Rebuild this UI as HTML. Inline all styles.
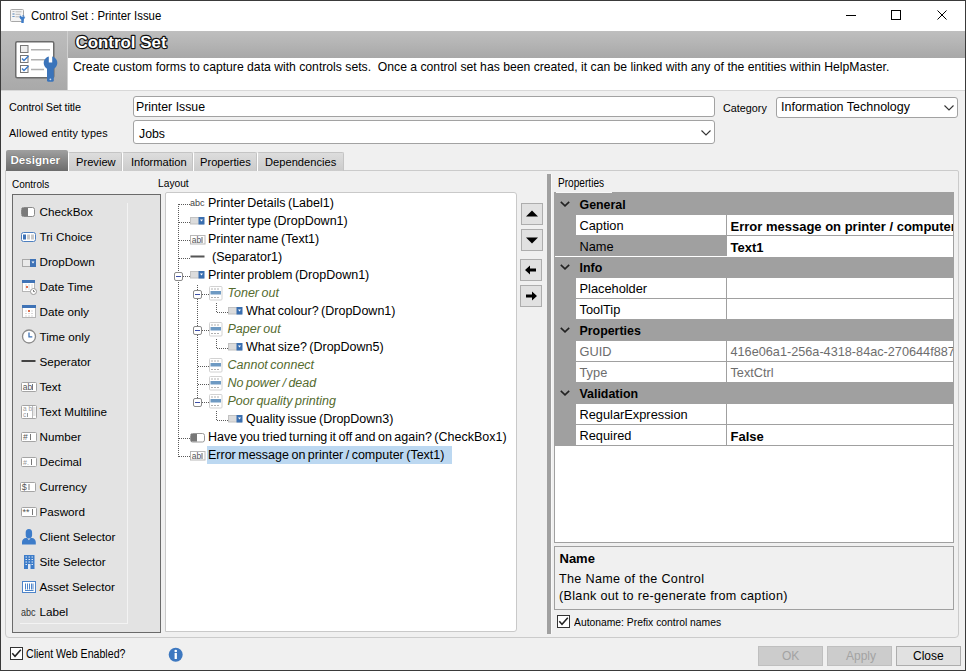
<!DOCTYPE html>
<html><head><meta charset="utf-8">
<style>
*{margin:0;padding:0;box-sizing:border-box;}
html,body{width:966px;height:671px;overflow:hidden;background:#f0f0f0;font-family:"Liberation Sans",sans-serif;color:#000;}
.a{position:absolute;}
.t{position:absolute;white-space:nowrap;line-height:1;}
svg{position:absolute;overflow:visible;}
.ci{font-size:11.4px;}
.tr{font-size:12.3px;}
.it{font-style:italic;color:#5d7a2d;}
.pg{font-size:12.3px;}
.btn{position:absolute;background:#e1e1e1;border:1px solid #adadad;}
</style></head><body>
<!-- window frame -->
<div class="a" style="left:0;top:0;width:966px;height:671px;border:1px solid #3a3a3a;"></div>
<!-- title bar -->
<div class="a" style="left:1px;top:1px;width:964px;height:30px;background:#fff;"></div>
<div class="t" style="left:30.5px;top:9.7px;font-size:12.3px;transform:scaleX(0.925);transform-origin:0 0;">Control Set : Printer Issue</div>
<!-- header -->
<div class="a" style="left:1px;top:31px;width:66px;height:59px;background:linear-gradient(#bdbdbd,#a9a9a9);"></div>
<div class="a" style="left:67px;top:31px;width:1px;height:59px;background:#d0d0d0;"></div>
<div class="a" style="left:68px;top:31px;width:897px;height:27px;background:linear-gradient(#bfbfbf,#a8a8a8);"></div>
<div class="a" style="left:68px;top:58px;width:897px;height:32px;background:#fff;"></div>
<div class="a" style="left:1px;top:90px;width:964px;height:1px;background:#d8d8d8;"></div>
<div class="t" style="left:73px;top:61px;font-size:12.2px;">Create custom forms to capture data with controls sets.&nbsp; Once a control set has been created, it can be linked with any of the entities within HelpMaster.</div>

<!-- title bar buttons -->
<div class="a" style="left:846px;top:15px;width:10px;height:1px;background:#000;"></div>
<div class="a" style="left:891px;top:10px;width:10px;height:10px;border:1px solid #000;"></div>
<svg style="left:937px;top:10px" width="10" height="10"><path d="M0.5 0.5L9.5 9.5M9.5 0.5L0.5 9.5" stroke="#000" stroke-width="1"/></svg>
<!-- form fields -->
<div class="t" style="left:9px;top:102px;font-size:10.8px;letter-spacing:-0.12px;">Control Set title</div>
<div class="t" style="left:9px;top:127.7px;font-size:10.8px;letter-spacing:0.17px;">Allowed entity types</div>
<div class="a" style="left:133px;top:96px;width:582px;height:21px;background:#fff;border:1px solid #a2a2a2;border-radius:3px;"></div>
<div class="t" style="left:136px;top:100.5px;font-size:12.3px;">Printer Issue</div>
<div class="a" style="left:133px;top:120px;width:582px;height:24px;background:#fff;border:1px solid #a2a2a2;border-radius:3px;"></div>
<div class="t" style="left:139px;top:128.3px;font-size:12.3px;">Jobs</div>
<svg style="left:701px;top:130px" width="10" height="6"><path d="M0.5 0.5L5 5L9.5 0.5" stroke="#333" stroke-width="1.1" fill="none"/></svg>
<div class="t" style="left:723px;top:102.5px;font-size:10.8px;">Category</div>
<div class="a" style="left:776px;top:97px;width:182px;height:21px;background:#fff;border:1px solid #a2a2a2;border-radius:3px;"></div>
<div class="t" style="left:781px;top:100.5px;font-size:12.5px;">Information Technology</div>
<svg style="left:944px;top:105px" width="10" height="6"><path d="M0.5 0.5L5 5L9.5 0.5" stroke="#333" stroke-width="1.1" fill="none"/></svg>
<!-- tab panel -->
<div class="a" style="left:5px;top:170px;width:954px;height:468px;border:1px solid #cbcbcb;border-radius:0 2px 4px 4px;"></div>
<!-- tabs -->
<div class="a" style="left:6px;top:150px;width:62px;height:21px;background:linear-gradient(#a0a0a0,#6c6c6c);border-radius:2px 2px 0 0;"></div>
<div class="t" style="left:10.5px;top:154.2px;font-size:11.6px;font-weight:bold;color:#fff;text-shadow:0 0 1px #444;">Designer</div>
<div class="a" style="left:68px;top:152px;width:54px;height:19px;background:linear-gradient(#dddddd,#cbcbcb);border:1px solid #c4c4c4;border-bottom:none;border-left:1px solid #fff;border-radius:2px 2px 0 0;"></div>
<div class="a" style="left:122px;top:152px;width:71px;height:19px;background:linear-gradient(#dddddd,#cbcbcb);border:1px solid #c4c4c4;border-bottom:none;border-left:1px solid #fff;border-radius:2px 2px 0 0;"></div>
<div class="a" style="left:193px;top:152px;width:64px;height:19px;background:linear-gradient(#dddddd,#cbcbcb);border:1px solid #c4c4c4;border-bottom:none;border-left:1px solid #fff;border-radius:2px 2px 0 0;"></div>
<div class="a" style="left:257px;top:152px;width:87px;height:19px;background:linear-gradient(#dddddd,#cbcbcb);border:1px solid #c4c4c4;border-bottom:none;border-left:1px solid #fff;border-radius:2px 2px 0 0;"></div>
<div class="t" style="left:76px;top:156.8px;font-size:11.15px;">Preview</div>
<div class="t" style="left:131px;top:156.8px;font-size:11.15px;">Information</div>
<div class="t" style="left:200px;top:156.8px;font-size:11.15px;">Properties</div>
<div class="t" style="left:265px;top:156.8px;font-size:11.15px;">Dependencies</div>
<div class="t" style="left:12px;top:177.90px;font-size:11.7px;transform:scaleX(0.855);transform-origin:0 0;">Controls</div>
<div class="t" style="left:158.3px;top:177.81px;font-size:11.8px;transform:scaleX(0.867);transform-origin:0 0;">Layout</div>
<div class="a" style="left:12px;top:194px;width:149px;height:439px;background:#e3e3e3;border:1px solid #6a6a6a;"></div>
<div class="a" style="left:127px;top:203px;width:1px;height:421px;background:#f3f3f3;"></div>
<div class="a" style="left:20px;top:623px;width:108px;height:1px;background:#f3f3f3;"></div>
<svg style="left:20px;top:206px" width="16" height="12"><rect x="1.5" y="1.5" width="13" height="9" rx="2" fill="#fff" stroke="#8a8a8a"/><path d="M2 2h6v8h-6z" fill="#7a7a7a"/></svg>
<div class="t" style="left:39.5px;top:205.60px;font-size:11.7px;">CheckBox</div>
<svg style="left:20px;top:231px" width="17" height="12"><rect x="1.5" y="1.5" width="14" height="9" rx="2" fill="#fff" stroke="#4d7fbf"/><rect x="3" y="3.5" width="3" height="5" fill="#3f73b6"/><rect x="7" y="3.5" width="3" height="5" fill="#c9c9c9"/><rect x="11" y="3.5" width="3" height="5" fill="#c9c9c9"/></svg>
<div class="t" style="left:39.5px;top:230.60px;font-size:11.7px;">Tri Choice</div>
<svg style="left:20px;top:258px" width="17" height="10"><rect x="2.5" y="1.5" width="13" height="7" fill="#eaeaea" stroke="#a8a8a8"/><rect x="10" y="1" width="6" height="8" fill="#3f73b6"/><path d="M11.5 3.5h3l-1.5 2z" fill="#fff"/></svg>
<div class="t" style="left:39.5px;top:255.60px;font-size:11.7px;">DropDown</div>
<svg style="left:20px;top:277.5px" width="17" height="17"><rect x="2.5" y="2.5" width="12" height="11" fill="#fff" stroke="#b5b5b5"/><rect x="2" y="2" width="13" height="3" fill="#3f73b6"/><path d="M5 7h2M8 7h2M11 7h2M5 9h2M8 9h2M11 9h2M5 11h2M8 11h2" stroke="#d8d8d8"/><rect x="6" y="8" width="2" height="2" fill="#e07050"/><circle cx="13.5" cy="13.5" r="3" fill="#fff" stroke="#9a9a9a"/><path d="M13.5 12v1.6h1.3" stroke="#555" stroke-width="0.8" fill="none"/></svg>
<div class="t" style="left:39.5px;top:280.60px;font-size:11.7px;">Date Time</div>
<svg style="left:20px;top:303px" width="17" height="16"><rect x="2.5" y="2.5" width="13" height="12" fill="#fff" stroke="#b5b5b5"/><rect x="2" y="2" width="14" height="3" fill="#3f73b6"/><path d="M5 8h2M8 8h2M11 8h2M5 10.5h2M8 10.5h2M11 10.5h2M5 13h2M8 13h2M11 13h2" stroke="#d8d8d8"/><rect x="8" y="7" width="2" height="2" fill="#e07050"/></svg>
<div class="t" style="left:39.5px;top:305.60px;font-size:11.7px;">Date only</div>
<svg style="left:20px;top:328px" width="17" height="17"><circle cx="9" cy="8.5" r="6.5" fill="#fff" stroke="#8a8a8a" stroke-width="1.3"/><path d="M9 4.5v4.3h3.3" stroke="#3f73b6" stroke-width="1.3" fill="none"/></svg>
<div class="t" style="left:39.5px;top:330.60px;font-size:11.7px;">Time only</div>
<svg style="left:20px;top:358.5px" width="17" height="4"><rect x="1.5" y="1" width="14" height="2" fill="#444"/></svg>
<div class="t" style="left:39.5px;top:355.60px;font-size:11.7px;">Seperator</div>
<svg style="left:20px;top:382px" width="18" height="11"><rect x="1.5" y="0.5" width="15" height="9" rx="1" fill="#fff" stroke="#a4a4a4"/><text x="2.8" y="8" font-family="Liberation Sans" font-size="8.5" fill="#555">ab</text><path d="M12.5 2v6" stroke="#777"/></svg>
<div class="t" style="left:39.5px;top:380.60px;font-size:11.7px;">Text</div>
<svg style="left:20px;top:405px" width="18" height="15"><rect x="1.5" y="0.5" width="15" height="13" rx="1" fill="#fff" stroke="#a4a4a4"/><text x="3" y="6" font-family="Liberation Sans" font-size="6.5" fill="#999">a b</text><text x="3" y="12" font-family="Liberation Sans" font-size="6.5" fill="#999">c</text><path d="M7.5 8v4" stroke="#999"/><path d="M12.5 1v12" stroke="#bbb"/><rect x="13" y="2" width="2.5" height="9" fill="#e6e6e6"/></svg>
<div class="t" style="left:39.5px;top:405.60px;font-size:11.7px;">Text Multiline</div>
<svg style="left:20px;top:432px" width="18" height="11"><rect x="1.5" y="0.5" width="15" height="9" rx="1" fill="#fff" stroke="#a4a4a4"/><text x="3" y="8" font-family="Liberation Sans" font-size="8.5" fill="#555">#</text><path d="M10.5 2v6" stroke="#777"/></svg>
<div class="t" style="left:39.5px;top:430.60px;font-size:11.7px;">Number</div>
<svg style="left:20px;top:457px" width="18" height="11"><rect x="1.5" y="0.5" width="15" height="9" rx="1" fill="#fff" stroke="#a4a4a4"/><text x="3" y="8" font-family="Liberation Sans" font-size="7" fill="#999">#.</text><path d="M11.5 2v6" stroke="#777"/></svg>
<div class="t" style="left:39.5px;top:455.60px;font-size:11.7px;">Decimal</div>
<svg style="left:19px;top:482px" width="18" height="11"><rect x="1.5" y="0.5" width="15" height="9" rx="1" fill="#fff" stroke="#a4a4a4"/><text x="2.8" y="8" font-family="Liberation Sans" font-size="9" fill="#555">$</text><path d="M10 2v6" stroke="#777"/></svg>
<div class="t" style="left:39.5px;top:480.60px;font-size:11.7px;">Currency</div>
<svg style="left:20px;top:507px" width="18" height="11"><rect x="1.5" y="0.5" width="15" height="9" rx="1" fill="#fff" stroke="#a4a4a4"/><text x="2.5" y="8" font-family="Liberation Sans" font-size="9" fill="#555">**</text><path d="M12.5 2v6" stroke="#777"/></svg>
<div class="t" style="left:39.5px;top:505.60px;font-size:11.7px;">Pasword</div>
<svg style="left:20px;top:529px" width="17" height="16"><path d="M5.7 3.5a3.2 3.5 0 0 1 6.4 0v2.5a3.2 3.5 0 0 1-6.4 0z" fill="#3d7cc9"/><path d="M2 15.5v-2.5c0-2.2 1.8-4 4-4h1.2l1.7 2.2l1.7-2.2h1.2c2.2 0 4 1.8 4 4v2.5z" fill="#3d7cc9"/></svg>
<div class="t" style="left:39.5px;top:530.60px;font-size:11.7px;">Client Selector</div>
<svg style="left:20px;top:554px" width="17" height="16"><rect x="4" y="1" width="10.5" height="14" fill="#3d7cc9"/><path d="M5.5 3h1.5M8.5 3h1.5M11.5 3h1.5M5.5 5.5h1.5M8.5 5.5h1.5M11.5 5.5h1.5M5.5 8h1.5M8.5 8h1.5M11.5 8h1.5M5.5 10.5h1.5M11.5 10.5h1.5" stroke="#dfe9f6" stroke-width="1.2"/><rect x="8" y="10" width="2.5" height="5" fill="#dfe9f6"/></svg>
<div class="t" style="left:39.5px;top:555.60px;font-size:11.7px;">Site Selector</div>
<svg style="left:20px;top:580px" width="17" height="14"><rect x="2.5" y="1.5" width="13" height="11" fill="#fff" stroke="#4d84c9"/><path d="M5.5 3.5v6M7.5 3.5v6M9.5 3.5v6M11.5 3.5v6M13 3.5v6" stroke="#4d84c9" stroke-width="1"/><path d="M5 10.5h8.5" stroke="#4d84c9" stroke-width="1"/></svg>
<div class="t" style="left:39.5px;top:580.60px;font-size:11.7px;">Asset Selector</div>
<svg style="left:20px;top:605.5px" width="18" height="12"><text x="1" y="10" font-family="Liberation Sans" font-size="10" fill="#333" textLength="14.5" lengthAdjust="spacingAndGlyphs">abc</text></svg>
<div class="t" style="left:39.5px;top:605.60px;font-size:11.7px;">Label</div>
<div class="a" style="left:165px;top:192px;width:352px;height:440px;background:#fff;border:1px solid #c9c9c9;border-radius:2px 3px 3px 0;"></div>
<div class="a" style="left:207px;top:446px;width:245px;height:18px;background:#bcd8f1;"></div>
<svg style="left:0;top:0" width="966" height="671"><g stroke="#5a5a5a" stroke-width="1" stroke-dasharray="1 1" fill="none" shape-rendering="crispEdges"><path d="M178.5 204V457"/><path d="M197.5 285V403"/><path d="M216.5 303V312M216.5 339V348M216.5 411V420"/><path d="M179.0 204.5H189.5"/><path d="M179.0 222.5H189.5"/><path d="M179.0 240.5H189.5"/><path d="M179.0 258.5H189.5"/><path d="M179.0 276.5H189.5"/><path d="M198.0 294.5H209"/><path d="M217.0 312.5H228"/><path d="M198.0 330.5H209"/><path d="M217.0 348.5H228"/><path d="M198.0 366.5H209"/><path d="M198.0 384.5H209"/><path d="M198.0 402.5H209"/><path d="M217.0 420.5H228"/><path d="M179.0 438.5H189.5"/><path d="M179.0 456.5H189.5"/></g></svg>
<svg style="left:189.5px;top:198px" width="16" height="12"><text x="0" y="8" font-family="Liberation Sans" font-size="9" fill="#444">abc</text></svg>
<div class="t" style="left:208px;top:196.92px;font-size:12.5px;word-spacing:-1px;">Printer Details (Label1)</div>
<svg style="left:189.5px;top:217px" width="15" height="8"><rect x="0.5" y="0.5" width="13" height="6.5" fill="#dcdcdc" stroke="#c2c2c2"/><rect x="8.5" y="0" width="6" height="7.5" fill="#3a6fb0"/><path d="M10 2.5h3l-1.5 2z" fill="#fff"/></svg>
<div class="t" style="left:208px;top:214.92px;font-size:12.5px;word-spacing:-1px;">Printer type (DropDown1)</div>
<svg style="left:189.5px;top:235px" width="16" height="10"><rect x="0.5" y="0.5" width="14.5" height="8.5" fill="#fff" stroke="#b8b8b8"/><text x="1.8" y="7.8" font-family="Liberation Sans" font-size="8.5" fill="#555">ab</text><path d="M12 2v6" stroke="#666"/></svg>
<div class="t" style="left:208px;top:232.92px;font-size:12.5px;word-spacing:-1px;">Printer name (Text1)</div>
<svg style="left:189.5px;top:255px" width="15" height="3"><rect x="0.5" y="0.5" width="14" height="2" fill="#555"/></svg>
<div class="t" style="left:208px;top:250.92px;font-size:12.5px;word-spacing:-1px;"><span style="padding-left:4px">(Separator1)</span></div>
<svg style="left:174.0px;top:272px" width="9" height="9"><rect x="0.5" y="0.5" width="8" height="8" rx="1.5" fill="#fff" stroke="#8a8a8a"/><path d="M2 4.5h5" stroke="#3d4fa8"/></svg>
<svg style="left:189.5px;top:271px" width="15" height="8"><rect x="0.5" y="0.5" width="13" height="6.5" fill="#dcdcdc" stroke="#c2c2c2"/><rect x="8.5" y="0" width="6" height="7.5" fill="#3a6fb0"/><path d="M10 2.5h3l-1.5 2z" fill="#fff"/></svg>
<div class="t" style="left:208px;top:268.92px;font-size:12.5px;word-spacing:-1px;">Printer problem (DropDown1)</div>
<svg style="left:193.0px;top:290px" width="9" height="9"><rect x="0.5" y="0.5" width="8" height="8" rx="1.5" fill="#fff" stroke="#8a8a8a"/><path d="M2 4.5h5" stroke="#3d4fa8"/></svg>
<svg style="left:209px;top:286px" width="14" height="15"><rect x="0.5" y="0.5" width="12.5" height="13.5" rx="1" fill="#fff" stroke="#d2d2d2"/><path d="M2 3h9" stroke="#b0b0b0" stroke-dasharray="2 1"/><rect x="1.5" y="5" width="10.5" height="3.5" fill="#6e9ac3"/><path d="M2 11.5h9" stroke="#b0b0b0" stroke-dasharray="2 1"/></svg>
<div class="t" style="left:227.5px;top:286.92px;font-size:12.5px;word-spacing:-1px;font-style:italic;color:#556b2f;">Toner out</div>
<svg style="left:228px;top:307px" width="15" height="8"><rect x="0.5" y="0.5" width="13" height="6.5" fill="#dcdcdc" stroke="#c2c2c2"/><rect x="8.5" y="0" width="6" height="7.5" fill="#3a6fb0"/><path d="M10 2.5h3l-1.5 2z" fill="#fff"/></svg>
<div class="t" style="left:246px;top:304.92px;font-size:12.5px;word-spacing:-1px;">What colour? (DropDown1)</div>
<svg style="left:193.0px;top:326px" width="9" height="9"><rect x="0.5" y="0.5" width="8" height="8" rx="1.5" fill="#fff" stroke="#8a8a8a"/><path d="M2 4.5h5" stroke="#3d4fa8"/></svg>
<svg style="left:209px;top:322px" width="14" height="15"><rect x="0.5" y="0.5" width="12.5" height="13.5" rx="1" fill="#fff" stroke="#d2d2d2"/><path d="M2 3h9" stroke="#b0b0b0" stroke-dasharray="2 1"/><rect x="1.5" y="5" width="10.5" height="3.5" fill="#6e9ac3"/><path d="M2 11.5h9" stroke="#b0b0b0" stroke-dasharray="2 1"/></svg>
<div class="t" style="left:227.5px;top:322.92px;font-size:12.5px;word-spacing:-1px;font-style:italic;color:#556b2f;">Paper out</div>
<svg style="left:228px;top:343px" width="15" height="8"><rect x="0.5" y="0.5" width="13" height="6.5" fill="#dcdcdc" stroke="#c2c2c2"/><rect x="8.5" y="0" width="6" height="7.5" fill="#3a6fb0"/><path d="M10 2.5h3l-1.5 2z" fill="#fff"/></svg>
<div class="t" style="left:246px;top:340.92px;font-size:12.5px;word-spacing:-1px;">What size? (DropDown5)</div>
<svg style="left:209px;top:358px" width="14" height="15"><rect x="0.5" y="0.5" width="12.5" height="13.5" rx="1" fill="#fff" stroke="#d2d2d2"/><path d="M2 3h9" stroke="#b0b0b0" stroke-dasharray="2 1"/><rect x="1.5" y="5" width="10.5" height="3.5" fill="#6e9ac3"/><path d="M2 11.5h9" stroke="#b0b0b0" stroke-dasharray="2 1"/></svg>
<div class="t" style="left:227.5px;top:358.92px;font-size:12.5px;word-spacing:-1px;font-style:italic;color:#556b2f;">Cannot connect</div>
<svg style="left:209px;top:376px" width="14" height="15"><rect x="0.5" y="0.5" width="12.5" height="13.5" rx="1" fill="#fff" stroke="#d2d2d2"/><path d="M2 3h9" stroke="#b0b0b0" stroke-dasharray="2 1"/><rect x="1.5" y="5" width="10.5" height="3.5" fill="#6e9ac3"/><path d="M2 11.5h9" stroke="#b0b0b0" stroke-dasharray="2 1"/></svg>
<div class="t" style="left:227.5px;top:376.92px;font-size:12.5px;word-spacing:-1px;font-style:italic;color:#556b2f;">No power / dead</div>
<svg style="left:193.0px;top:398px" width="9" height="9"><rect x="0.5" y="0.5" width="8" height="8" rx="1.5" fill="#fff" stroke="#8a8a8a"/><path d="M2 4.5h5" stroke="#3d4fa8"/></svg>
<svg style="left:209px;top:394px" width="14" height="15"><rect x="0.5" y="0.5" width="12.5" height="13.5" rx="1" fill="#fff" stroke="#d2d2d2"/><path d="M2 3h9" stroke="#b0b0b0" stroke-dasharray="2 1"/><rect x="1.5" y="5" width="10.5" height="3.5" fill="#6e9ac3"/><path d="M2 11.5h9" stroke="#b0b0b0" stroke-dasharray="2 1"/></svg>
<div class="t" style="left:227.5px;top:394.92px;font-size:12.5px;word-spacing:-1px;font-style:italic;color:#556b2f;">Poor quality printing</div>
<svg style="left:228px;top:415px" width="15" height="8"><rect x="0.5" y="0.5" width="13" height="6.5" fill="#dcdcdc" stroke="#c2c2c2"/><rect x="8.5" y="0" width="6" height="7.5" fill="#3a6fb0"/><path d="M10 2.5h3l-1.5 2z" fill="#fff"/></svg>
<div class="t" style="left:246px;top:412.92px;font-size:12.5px;word-spacing:-1px;">Quality issue (DropDown3)</div>
<svg style="left:189.5px;top:433px" width="15" height="10"><rect x="0.5" y="0.5" width="14" height="8.5" rx="2" fill="#fff" stroke="#999"/><path d="M1 1h6v7.5h-6z" fill="#777"/></svg>
<div class="t" style="left:208px;top:430.92px;font-size:12.5px;word-spacing:-1px;">Have you tried turning it off and on again? (CheckBox1)</div>
<svg style="left:189.5px;top:451px" width="16" height="10"><rect x="0.5" y="0.5" width="14.5" height="8.5" fill="#fff" stroke="#b8b8b8"/><text x="1.8" y="7.8" font-family="Liberation Sans" font-size="8.5" fill="#555">ab</text><path d="M12 2v6" stroke="#666"/></svg>
<div class="t" style="left:208px;top:448.92px;font-size:12.5px;word-spacing:-1px;">Error message on printer / computer (Text1)</div>
<div class="btn" style="left:521px;top:203px;width:22px;height:22px;"></div>
<svg style="left:526px;top:210px" width="12" height="8"><path d="M0 6.5L6 0.5L12 6.5z" fill="#000"/></svg>
<div class="btn" style="left:521px;top:229px;width:22px;height:22px;"></div>
<svg style="left:526px;top:237px" width="12" height="8"><path d="M0 0.5L6 6.5L12 0.5z" fill="#000"/></svg>
<div class="btn" style="left:520px;top:259px;width:22px;height:22px;"></div>
<svg style="left:525px;top:265px" width="12" height="10"><path d="M0 5L5 0.5V3.5H11V6.5H5V9.5z" fill="#000"/></svg>
<div class="btn" style="left:520px;top:285px;width:22px;height:22px;"></div>
<svg style="left:526px;top:291px" width="12" height="10"><path d="M11 5L6 0.5V3.5H0V6.5H6V9.5z" fill="#000"/></svg>
<div class="a" style="left:547px;top:174px;width:4px;height:460px;background:#a0a0a0;"></div>
<div class="a" style="left:551px;top:174px;width:1px;height:460px;background:#f9f9f9;"></div>
<div class="t" style="left:558px;top:178.43px;font-size:11.9px;transform:scaleX(0.85);transform-origin:0 0;">Properties</div>
<div class="a" style="left:554px;top:192px;width:400px;height:351px;background:#fff;border:1px solid #a0a0a0;"></div>
<div class="a" style="left:555px;top:193px;width:398px;height:253px;background:#a0a0a0;"></div>
<svg style="left:560px;top:201px" width="10" height="6"><path d="M0.8 0.8L5 4.8L9.2 0.8" stroke="#222" stroke-width="1.6" fill="none"/></svg>
<div class="t" style="left:579.5px;top:198.50px;font-size:12.4px;font-weight:bold;color:#000;">General</div>
<div class="a" style="left:576px;top:215px;width:150px;height:20px;background:#fff;"></div>
<div class="a" style="left:727px;top:215px;width:226px;height:20px;background:#fff;overflow:hidden;"></div>
<div class="t" style="left:579.5px;top:220.16px;font-size:12.8px;color:#000;">Caption</div>
<div class="a" style="left:727px;top:215px;width:226px;height:20px;overflow:hidden;"><div class="t" style="left:3.5px;top:4.50px;font-size:13px;font-weight:bold;color:#000;">Error message on printer / computer (Text1)</div>
</div>
<div class="a" style="left:576px;top:236px;width:150px;height:20px;background:#a0a0a0;"></div>
<div class="a" style="left:727px;top:236px;width:226px;height:20px;background:#fff;overflow:hidden;"></div>
<div class="t" style="left:579.5px;top:241.16px;font-size:12.8px;color:#000;">Name</div>
<div class="a" style="left:727px;top:236px;width:226px;height:20px;overflow:hidden;"><div class="t" style="left:3.5px;top:4.50px;font-size:13px;font-weight:bold;color:#000;">Text1</div>
</div>
<svg style="left:560px;top:264px" width="10" height="6"><path d="M0.8 0.8L5 4.8L9.2 0.8" stroke="#222" stroke-width="1.6" fill="none"/></svg>
<div class="t" style="left:579.5px;top:261.50px;font-size:12.4px;font-weight:bold;color:#000;">Info</div>
<div class="a" style="left:576px;top:278px;width:150px;height:20px;background:#fff;"></div>
<div class="a" style="left:727px;top:278px;width:226px;height:20px;background:#fff;overflow:hidden;"></div>
<div class="t" style="left:579.5px;top:283.16px;font-size:12.8px;color:#000;">Placeholder</div>
<div class="a" style="left:576px;top:299px;width:150px;height:20px;background:#fff;"></div>
<div class="a" style="left:727px;top:299px;width:226px;height:20px;background:#fff;overflow:hidden;"></div>
<div class="t" style="left:579.5px;top:304.16px;font-size:12.8px;color:#000;">ToolTip</div>
<svg style="left:560px;top:327px" width="10" height="6"><path d="M0.8 0.8L5 4.8L9.2 0.8" stroke="#222" stroke-width="1.6" fill="none"/></svg>
<div class="t" style="left:579.5px;top:324.50px;font-size:12.4px;font-weight:bold;color:#000;">Properties</div>
<div class="a" style="left:576px;top:341px;width:150px;height:20px;background:#fff;"></div>
<div class="a" style="left:727px;top:341px;width:226px;height:20px;background:#fff;overflow:hidden;"></div>
<div class="t" style="left:579.5px;top:346.16px;font-size:12.8px;color:#6d6d6d;">GUID</div>
<div class="a" style="left:727px;top:341px;width:226px;height:20px;overflow:hidden;"><div class="t" style="left:3.5px;top:4.75px;font-size:12.7px;font-weight:normal;color:#6d6d6d;">416e06a1-256a-4318-84ac-270644f887a2</div>
</div>
<div class="a" style="left:576px;top:362px;width:150px;height:20px;background:#fff;"></div>
<div class="a" style="left:727px;top:362px;width:226px;height:20px;background:#fff;overflow:hidden;"></div>
<div class="t" style="left:579.5px;top:367.16px;font-size:12.8px;color:#6d6d6d;">Type</div>
<div class="a" style="left:727px;top:362px;width:226px;height:20px;overflow:hidden;"><div class="t" style="left:3.5px;top:4.75px;font-size:12.7px;font-weight:normal;color:#6d6d6d;">TextCtrl</div>
</div>
<svg style="left:560px;top:390px" width="10" height="6"><path d="M0.8 0.8L5 4.8L9.2 0.8" stroke="#222" stroke-width="1.6" fill="none"/></svg>
<div class="t" style="left:579.5px;top:387.50px;font-size:12.4px;font-weight:bold;color:#000;">Validation</div>
<div class="a" style="left:576px;top:404px;width:150px;height:20px;background:#fff;"></div>
<div class="a" style="left:727px;top:404px;width:226px;height:20px;background:#fff;overflow:hidden;"></div>
<div class="t" style="left:579.5px;top:409.16px;font-size:12.8px;color:#000;">RegularExpression</div>
<div class="a" style="left:576px;top:425px;width:150px;height:20px;background:#fff;"></div>
<div class="a" style="left:727px;top:425px;width:226px;height:20px;background:#fff;overflow:hidden;"></div>
<div class="t" style="left:579.5px;top:430.16px;font-size:12.8px;color:#000;">Required</div>
<div class="a" style="left:727px;top:425px;width:226px;height:20px;overflow:hidden;"><div class="t" style="left:3.5px;top:4.50px;font-size:13px;font-weight:bold;color:#000;">False</div>
</div>
<div class="a" style="left:556px;top:192px;width:56px;height:1px;background:#f8f8f8;"></div>
<div class="a" style="left:555px;top:256px;width:398px;height:1px;background:#fff;"></div>
<div class="a" style="left:554px;top:546px;width:400px;height:64px;background:#f0f0f0;border:1px solid #a0a0a0;"></div>
<div class="t" style="left:559.5px;top:551.80px;font-size:13px;font-weight:bold;">Name</div>
<div class="t" style="left:559px;top:573.03px;font-size:12.6px;letter-spacing:0.32px;">The Name of the Control</div>
<div class="t" style="left:559px;top:589.73px;font-size:12.6px;letter-spacing:0.32px;">(Blank out to re-generate from caption)</div>
<div class="a" style="left:557px;top:615px;width:13px;height:13px;background:#fff;border:1px solid #333;"></div>
<svg style="left:557px;top:615px" width="13" height="13"><path d="M2.3 6.3L5 9.3L10.8 2.8" stroke="#222" stroke-width="1.5" fill="none"/></svg>
<div class="t" style="left:573.5px;top:617.13px;font-size:11.3px;transform:scaleX(0.915);transform-origin:0 0;">Autoname: Prefix control names</div>
<div class="a" style="left:10px;top:647px;width:13px;height:13px;background:#fff;border:1px solid #333;"></div>
<svg style="left:10px;top:647px" width="13" height="13"><path d="M2.3 6.3L5 9.3L10.8 2.8" stroke="#222" stroke-width="1.5" fill="none"/></svg>
<div class="t" style="left:25.7px;top:647.77px;font-size:12.2px;transform:scaleX(0.87);transform-origin:0 0;">Client Web Enabled?</div>
<svg style="left:168px;top:647px" width="15" height="15"><circle cx="7.7" cy="7.7" r="7" fill="#3d78c0"/><rect x="6.6" y="6" width="2.3" height="6" fill="#fff"/><circle cx="7.75" cy="4" r="1.3" fill="#fff"/></svg>
<div class="a" style="left:758px;top:646px;width:65px;height:20px;background:#cccccc;border:1px solid #bfbfbf;"></div>
<div class="a" style="left:827px;top:646px;width:65px;height:20px;background:#cccccc;border:1px solid #bfbfbf;"></div>
<div class="a" style="left:896px;top:646px;width:65px;height:20px;background:#e1e1e1;border:1px solid #adadad;"></div>
<div class="t" style="left:782px;top:650.34px;font-size:12px;color:#a3a3a3;">OK</div>
<div class="t" style="left:846px;top:650.34px;font-size:12px;color:#a3a3a3;">Apply</div>
<div class="t" style="left:913px;top:650.34px;font-size:12px;">Close</div>
<svg style="left:0;top:0" width="200" height="100"><text x="75.5" y="48" font-family="Liberation Sans" font-weight="bold" font-size="16.9" fill="#fff" stroke="#111" stroke-width="2.4" paint-order="stroke" stroke-linejoin="round">Control Set</text></svg>
<svg style="left:0;top:0" width="68" height="91"><rect x="15.75" y="41.75" width="38" height="36" rx="1.5" fill="#fff" stroke="#6b6b6b" stroke-width="1.5"/><rect x="20.5" y="45.5" width="7.5" height="7" fill="#eeeeee" stroke="#777" stroke-width="1"/><rect x="20.5" y="55.5" width="7.5" height="7" fill="#fff" stroke="#777" stroke-width="1"/><rect x="20.5" y="65.5" width="7.5" height="7" fill="#fff" stroke="#777" stroke-width="1"/><path d="M22 58.5l2 2l4.5-4.5M22 68.5l2 2l4.5-4.5" stroke="#3d7cc9" stroke-width="1.5" fill="none"/><path d="M31 49.8h19M31 59.8h14M31 69.5h13" stroke="#b0b0b0" stroke-width="1.6"/><path d="M48.8 56.4A6.8 6.8 0 1 0 52.2 56.4V62.5H48.8Z" fill="#3b74ba"/><rect x="47" y="66" width="6.8" height="15.8" rx="1.6" fill="#3b74ba"/><circle cx="50.4" cy="79.3" r="0.9" fill="#cfdcef"/></svg>
<svg style="left:0;top:0" width="40" height="30"><rect x="10.5" y="9.5" width="13" height="12" rx="1" fill="#f4f4f4" stroke="#a8a8a8"/><path d="M12.5 11.5h2M12.5 14h2M12.5 16.5h2M15.5 11.8h6M15.5 14.3h5M15.5 16.8h4" stroke="#b8b8b8" stroke-width="1"/><path d="M12.5 14h2M12.5 16.5h2" stroke="#6a9ad0" stroke-width="1"/><path d="M20 15.3a2.8 2.8 0 1 0 4.6 0v2h-1v-2.3h-1v2.5z" fill="#3d7cc9"/><rect x="21.3" y="17" width="2.4" height="6" fill="#3d7cc9"/></svg>
</body></html>
